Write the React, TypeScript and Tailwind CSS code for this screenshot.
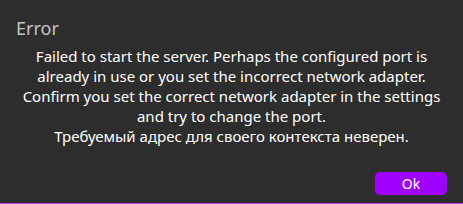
export default function App() {
  return (
    <div className="flex h-[204px] w-[463px] flex-col bg-[#2d2d2d] font-['Noto_Sans',sans-serif]">
      <div className="px-4 pt-[16px] text-[18px] leading-[24px] text-[#c4c4c4]">Error</div>
      <div className="mt-[6px] px-2 text-center text-[15px] leading-[20px] text-white">
        <p>Failed to start the server. Perhaps the configured port is</p>
        <p>already in use or you set the incorrect network adapter.</p>
        <p>Confirm you set the correct network adapter in the settings</p>
        <p>and try to change the port.</p>
        <p>Требуемый адрес для своего контекста неверен.</p>
      </div>
      <div className="mt-auto flex justify-end px-4 pb-2">
        <button
          type="button"
          className="h-[23px] w-[72px] rounded-[5px] bg-[#a000ff] text-[14px] leading-none text-white"
        >
          Ok
        </button>
      </div>
      <div className="h-px bg-[#c040ff]" />
    </div>
  );
}
